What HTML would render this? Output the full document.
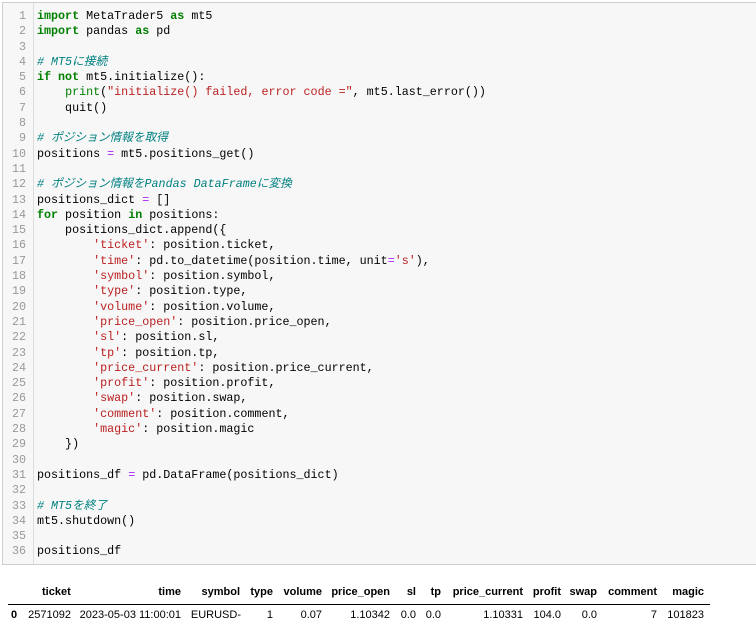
<!DOCTYPE html>
<html><head><meta charset="utf-8"><style>
body{margin:0;background:#fff;width:756px;height:629px;overflow:hidden;position:relative}
.code{position:absolute;left:2px;top:2px;width:760px;height:563px;background:#f7f7f7;border:1px solid #cfcfcf;box-sizing:border-box}
.gut{position:absolute;left:0;top:0;width:30px;height:100%;border-right:1px solid #ddd}
pre{margin:0;font-family:"Liberation Mono","Noto Sans CJK JP",monospace;font-size:11.7px;line-height:15.29px}
.ln{position:absolute;left:0;top:6px;width:23px;text-align:right;color:#999}
.src{position:absolute;left:34px;top:6px;color:#000}
.k{color:#008000;font-weight:bold}.s{color:#ba2121}.c{color:#008080;font-style:italic}.o{color:#aa22ff}.b{color:#008000}
.t{position:absolute;font-family:"Liberation Sans",Arial,sans-serif;font-size:11px;white-space:nowrap}
.h{font-weight:bold;top:586px}.r{top:609px}
.line{position:absolute;left:8px;width:702px;top:604px;height:1px;background:#000}
</style></head><body>
<div class="code"><div class="gut"></div>
<pre class="ln">1
2
3
4
5
6
7
8
9
10
11
12
13
14
15
16
17
18
19
20
21
22
23
24
25
26
27
28
29
30
31
32
33
34
35
36</pre>
<pre class="src"><span class="k">import</span> MetaTrader5 <span class="k">as</span> mt5
<span class="k">import</span> pandas <span class="k">as</span> pd

<span class="c"># MT5に接続</span>
<span class="k">if</span> <span class="k">not</span> mt5.initialize():
    <span class="b">print</span>(<span class="s">"initialize() failed, error code ="</span>, mt5.last_error())
    quit()

<span class="c"># ポジション情報を取得</span>
positions <span class="o">=</span> mt5.positions_get()

<span class="c"># ポジション情報をPandas DataFrameに変換</span>
positions_dict <span class="o">=</span> []
<span class="k">for</span> position <span class="k">in</span> positions:
    positions_dict.append({
        <span class="s">'ticket'</span>: position.ticket,
        <span class="s">'time'</span>: pd.to_datetime(position.time, unit<span class="o">=</span><span class="s">'s'</span>),
        <span class="s">'symbol'</span>: position.symbol,
        <span class="s">'type'</span>: position.type,
        <span class="s">'volume'</span>: position.volume,
        <span class="s">'price_open'</span>: position.price_open,
        <span class="s">'sl'</span>: position.sl,
        <span class="s">'tp'</span>: position.tp,
        <span class="s">'price_current'</span>: position.price_current,
        <span class="s">'profit'</span>: position.profit,
        <span class="s">'swap'</span>: position.swap,
        <span class="s">'comment'</span>: position.comment,
        <span class="s">'magic'</span>: position.magic
    })

positions_df <span class="o">=</span> pd.DataFrame(positions_dict)

<span class="c"># MT5を終了</span>
mt5.shutdown()

positions_df</pre>
</div>
<div class="line"></div>
<span class="t h" style="left:42px">ticket</span>
<span class="t h" style="right:575px">time</span>
<span class="t h" style="right:516px">symbol</span>
<span class="t h" style="right:483px">type</span>
<span class="t h" style="right:434px">volume</span>
<span class="t h" style="right:366px">price_open</span>
<span class="t h" style="right:340px">sl</span>
<span class="t h" style="right:315px">tp</span>
<span class="t h" style="right:233px">price_current</span>
<span class="t h" style="right:195px">profit</span>
<span class="t h" style="right:159px">swap</span>
<span class="t h" style="right:99px">comment</span>
<span class="t h" style="right:52px">magic</span>
<span class="t r" style="left:11px;font-weight:bold">0</span>
<span class="t r" style="right:685px">2571092</span>
<span class="t r" style="right:575px">2023-05-03 11:00:01</span>
<span class="t r" style="right:515px">EURUSD-</span>
<span class="t r" style="right:483px">1</span>
<span class="t r" style="right:434px">0.07</span>
<span class="t r" style="right:366px">1.10342</span>
<span class="t r" style="right:340px">0.0</span>
<span class="t r" style="right:315px">0.0</span>
<span class="t r" style="right:233px">1.10331</span>
<span class="t r" style="right:195px">104.0</span>
<span class="t r" style="right:159px">0.0</span>
<span class="t r" style="right:99px">7</span>
<span class="t r" style="right:52px">101823</span>
</body></html>
